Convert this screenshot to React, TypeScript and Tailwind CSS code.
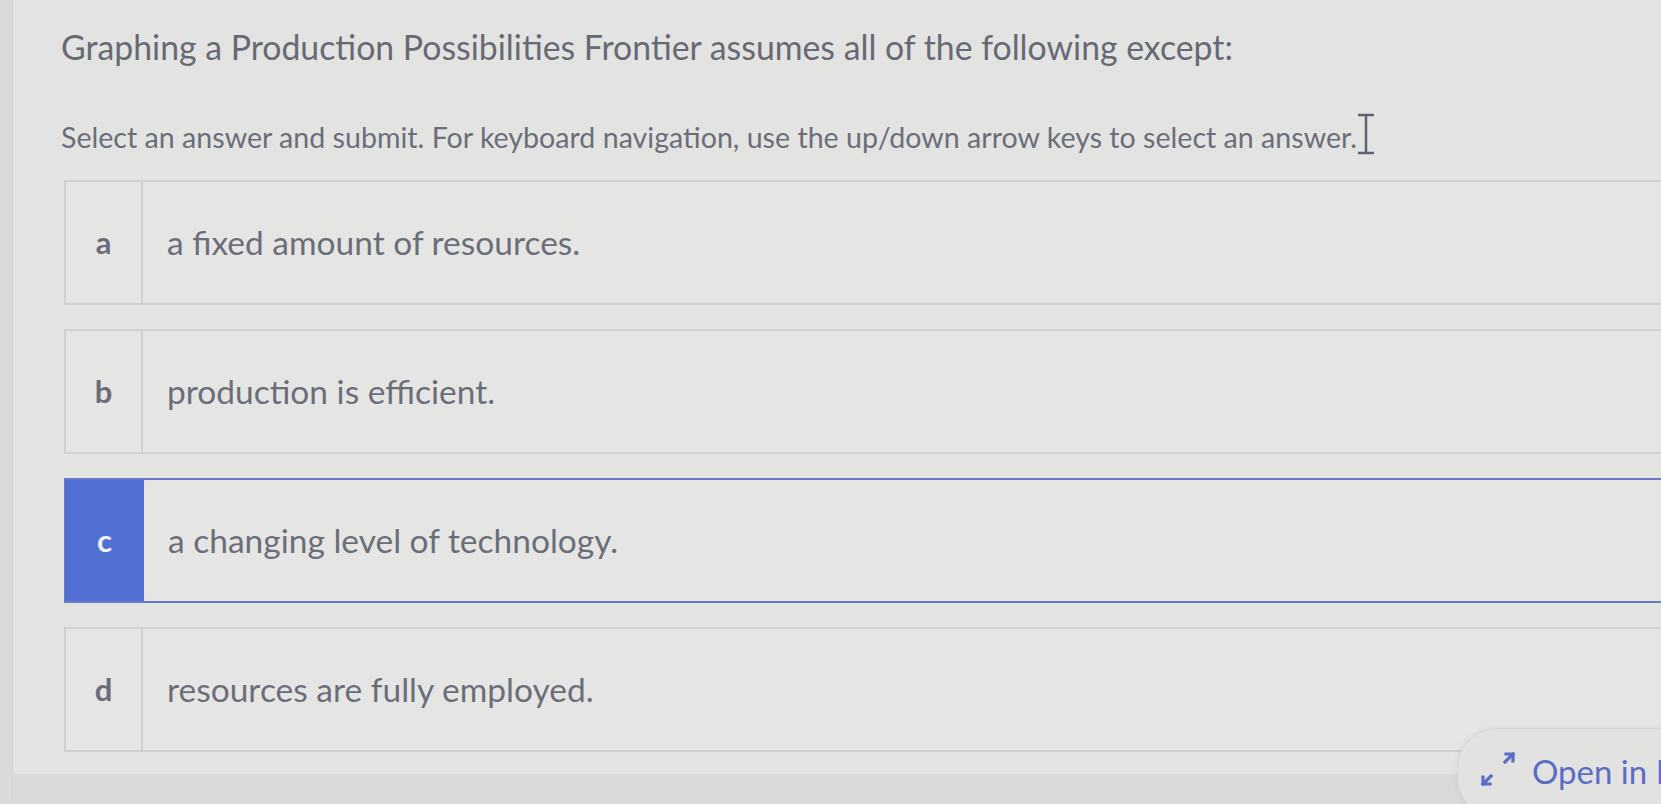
import React from 'react';

interface Choice {
  letter: string;
  text: string;
  selected?: boolean;
}

const choices: Choice[] = [
  { letter: 'a', text: 'a fixed amount of resources.' },
  { letter: 'b', text: 'production is efficient.' },
  { letter: 'c', text: 'a changing level of technology.', selected: true },
  { letter: 'd', text: 'resources are fully employed.' },
];

const ChoiceRow: React.FC<Choice> = ({ letter, text, selected }) => {
  return (
    <div
      className={
        selected
          ? 'flex h-[125px] border-y-2 border-l border-[#6a78c6] bg-[#e5e6e4]'
          : 'flex h-[125px] border-y-2 border-l-2 border-[#d0d1cf] bg-[#e5e6e4]'
      }
    >
      <div
        className={
          selected
            ? 'flex w-[79px] shrink-0 items-center justify-center bg-[#5270d3] text-[31px] font-bold text-[#eef0f8]'
            : 'flex w-[77px] shrink-0 items-center justify-center border-r-2 border-[#d0d1cf] text-[31px] font-bold text-[#6a6d79]'
        }
      >
        {letter}
      </div>
      <div className="flex items-center pl-6 text-[33.5px] text-[#6b6e79]">{text}</div>
    </div>
  );
};

const ExpandIcon: React.FC = () => (
  <svg width="36" height="36" viewBox="0 0 36 36" fill="none" stroke="#5a6dc6" strokeWidth="3.2" strokeLinecap="square">
    <path d="M25 11 L33 3" />
    <path d="M26 3 H33 V10" />
    <path d="M11 25 L3 33" />
    <path d="M3 26 V33 H10" />
  </svg>
);

export default function App() {
  return (
    <div
      className="relative flex h-[804px] w-full overflow-hidden bg-[#dfe0de]"
      style={{ fontFamily: 'Lato, "Noto Sans", sans-serif' }}
    >
      <div className="w-[13px] shrink-0 border-r border-[#d2d3d1] bg-[#dadbd9]" />
      <div className="flex flex-1 flex-col">
        <div className="flex h-[774px] flex-col bg-[#e3e4e2] pl-[48px]">
          <h1 className="mt-[27px] text-[33.8px] leading-[40px] text-[#676a75]">
            Graphing a Production Possibilities Frontier assumes all of the following except:
          </h1>
          <p className="mt-[52px] text-[28.6px] leading-[36px] text-[#6b6e79]">
            Select an answer and submit. For keyboard navigation, use the up/down arrow keys to select an answer.
          </p>
          <div className="ml-[3px] mt-[25px] flex flex-col gap-[24px]">
            {choices.map((c) => (
              <ChoiceRow key={c.letter} {...c} />
            ))}
          </div>
        </div>
        <div className="flex-1 bg-[#d9dad8]" />
      </div>

      {/* text cursor */}
      <svg className="absolute left-[1356px] top-[113px]" width="20" height="42" viewBox="0 0 20 42" fill="none" stroke="#5f6170" strokeWidth="2.5">
        <path d="M2 2 H18 M10 2 V40 M2 40 H18" />
      </svg>

      {/* open in button */}
      <div className="absolute left-[1457px] top-[728px] flex h-[90px] w-[260px] items-start gap-4 rounded-l-[40px] border border-[#d6d7d5] bg-[#e2e3e1] pl-[22px] pt-[22px] shadow-[0_0_6px_rgba(0,0,0,0.06)]">
        <ExpandIcon />
        <span className="text-[33px] leading-[40px] text-[#5a6dc6]">Open in P</span>
      </div>
    </div>
  );
}
